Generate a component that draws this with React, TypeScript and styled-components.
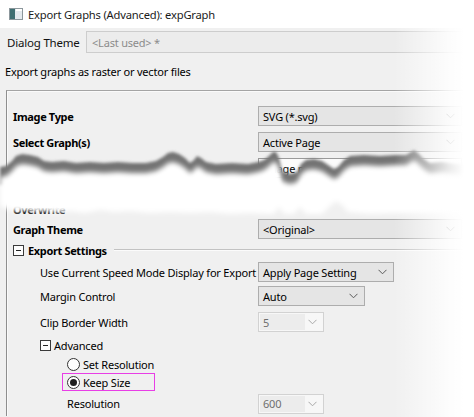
import React from "react";
import styled, { createGlobalStyle } from "styled-components";

const GlobalStyle = createGlobalStyle`
  html, body {
    margin: 0;
    padding: 0;
    background: #ffffff;
  }
  body {
    font-family: "Noto Sans", "Open Sans", "Liberation Sans", sans-serif;
    font-size: 11px;
    letter-spacing: -0.2px;
    color: #000;
  }
`;

const Window = styled.div`
  position: relative;
  width: 474px;
  height: 417px;
  overflow: hidden;
  background: #f0f0f0;
`;

const TitleBar = styled.div`
  height: 28px;
  background: #ffffff;
  display: flex;
  align-items: center;
  padding-left: 9px;
  gap: 5px;
  font-size: 11.2px;
  color: #1b1b1b;
`;

const ThemeRow = styled.div`
  display: flex;
  align-items: center;
  height: 28px;
  padding: 0 0 0 7px;
`;

const ThemeLabel = styled.span`
  width: 79px;
  font-size: 11.5px;
  color: #111;
`;

const ThemeInput = styled.div`
  flex: 1;
  height: 20px;
  display: flex;
  align-items: center;
  padding-left: 5px;
  background: #ececec;
  border: 1px solid #cdcdcd;
  border-right: none;
  color: #8b8b8b;
`;

const Description = styled.div`
  height: 30px;
  padding-bottom: 4px;
  display: flex;
  align-items: center;
  padding-left: 5px;
`;

const Panel = styled.div`
  margin-left: 6px;
  border-left: 1px solid #8e8e8e;
  border-top: 1px solid #a4a4a4;
  box-shadow: inset 1px 1px 0 #fafafa;
  padding-top: 12px;
`;

const Row = styled.div<{ $h: number }>`
  display: grid;
  grid-template-columns: 251px 1fr;
  align-items: center;
  height: ${(p) => p.$h}px;
`;

const Label = styled.div<{ $indent: number; $bold?: boolean }>`
  padding-left: ${(p) => p.$indent}px;
  font-weight: ${(p) => (p.$bold ? 700 : 400)};
  letter-spacing: ${(p) => (p.$bold ? "-0.35px" : "-0.2px")};
  white-space: nowrap;
`;

const Combo = styled.div<{ $w?: number; $disabled?: boolean }>`
  box-sizing: border-box;
  width: ${(p) => (p.$w ? `${p.$w}px` : "204px")};
  height: 20px;
  display: flex;
  align-items: center;
  justify-content: space-between;
  padding: 0 6px 0 4px;
  background: ${(p) => (p.$disabled ? "#f7f7f7" : "#e5e5e5")};
  border: 1px solid ${(p) => (p.$disabled ? "#d2d2d2" : "#adadad")};
  color: ${(p) => (p.$disabled ? "#6f6f6f" : "#000")};
`;

const ComboText = styled.span<{ $disabled?: boolean }>`
  display: flex;
  align-items: center;
  height: 16px;
  width: ${(p) => (p.$disabled ? "42px" : "auto")};
  margin-left: ${(p) => (p.$disabled ? "-3px" : "0")};
  padding-left: ${(p) => (p.$disabled ? "3px" : "0")};
  background: ${(p) => (p.$disabled ? "#ececec" : "transparent")};
`;

const EditBox = styled.div`
  box-sizing: border-box;
  width: 204px;
  height: 20px;
  display: flex;
  align-items: center;
  padding-left: 4px;
  background: #fbfbfb;
  border: 1px solid #9a9a9a;
`;

const GroupHeader = styled.div`
  display: flex;
  align-items: center;
  gap: 4px;
  padding-left: 6px;
  height: 22px;
  font-weight: 700;
  letter-spacing: -0.35px;
`;

const GroupLine = styled.div`
  flex: 1;
  height: 1px;
  margin-left: 3px;
  margin-top: -2px;
  background: #c2c2c2;
  box-shadow: 0 1px 0 #fbfbfb;
`;

const ToggleBox = styled.span`
  box-sizing: border-box;
  position: relative;
  width: 11px;
  height: 11px;
  border: 1px solid #3a3a3a;
  background: #fdfdfd;
  flex: none;
  &::after {
    content: "";
    position: absolute;
    left: 2px;
    right: 2px;
    top: 4px;
    height: 1px;
    background: #222;
  }
`;

const SubHeader = styled.div`
  display: flex;
  align-items: center;
  gap: 3px;
  padding-left: 33px;
  height: 20px;
`;

const RadioRow = styled.div<{ $h: number }>`
  display: flex;
  align-items: center;
  height: ${(p) => p.$h}px;
  padding-left: 55px;
`;

const RadioLabel = styled.label<{ $highlight?: boolean }>`
  box-sizing: border-box;
  display: flex;
  align-items: center;
  gap: 3px;
  height: 18px;
  padding-left: 4px;
  width: ${(p) => (p.$highlight ? "93px" : "auto")};
  border: 1.5px solid ${(p) => (p.$highlight ? "#e83ee6" : "transparent")};
`;

const RadioCircle = styled.span<{ $checked?: boolean }>`
  box-sizing: border-box;
  position: relative;
  width: 13px;
  height: 13px;
  border-radius: 50%;
  border: 1px solid #333;
  background: #fff;
  flex: none;
  &::after {
    content: "";
    display: ${(p) => (p.$checked ? "block" : "none")};
    position: absolute;
    left: 2px;
    top: 2px;
    width: 7px;
    height: 7px;
    border-radius: 50%;
    background: #1f1f1f;
  }
`;

const TearGap = styled.div`
  height: 18px;
`;

const Tear = styled.svg`
  position: absolute;
  left: 0;
  top: 140px;
`;

const Fade = styled.div`
  position: absolute;
  top: 0;
  right: 0;
  bottom: 0;
  width: 80px;
  pointer-events: none;
  background: linear-gradient(
    to right,
    rgba(255, 255, 255, 0) 0px,
    rgba(255, 255, 255, 0.85) 55px,
    #ffffff 70px
  );
`;

function Chevron({ disabled }: { disabled?: boolean }) {
  return (
    <svg width="9" height="6" viewBox="0 0 9 6">
      <polyline
        points="0.5,0.8 4.5,4.8 8.5,0.8"
        fill="none"
        stroke={disabled ? "#a8a8a8" : "#5a5a5a"}
        strokeWidth="1"
      />
    </svg>
  );
}

function WindowIcon() {
  return (
    <svg width="14" height="12" viewBox="0 0 14 12">
      <rect x="0.5" y="0.5" width="13" height="11" fill="#e4eaee" stroke="#8c979c" />
      <rect x="1" y="1" width="5" height="10" fill="#3f6f72" />
      <rect x="7" y="1" width="6" height="2" fill="#ffffff" />
    </svg>
  );
}

// torn paper edge of the upper piece (absolute y)
const upperEdge: [number, number][] = [
  [0, 167], [6, 166], [12, 161], [16, 156], [22, 154], [30, 155], [38, 157],
  [44, 161], [52, 162], [64, 161], [76, 163], [90, 162], [104, 163], [118, 162],
  [132, 163], [146, 163], [156, 161], [163, 157], [168, 153], [173, 152],
  [179, 154], [185, 158], [190, 163], [194, 160], [197, 156], [201, 158],
  [206, 162], [216, 164], [232, 163], [248, 164], [258, 162], [264, 160],
  [269, 156], [273, 152], [276, 152], [279, 158], [282, 171], [290, 174],
  [297, 172], [301, 164], [306, 160], [314, 159], [322, 161], [328, 165],
  [334, 169], [338, 167], [344, 160], [350, 156], [364, 155], [380, 156],
  [396, 155], [406, 155], [411, 152], [414, 150], [418, 153], [424, 159],
  [430, 163], [442, 162], [456, 164], [474, 165],
];

// torn edge of the lower piece
const lowerEdge: [number, number][] = [
  [0, 206], [10, 210], [18, 212], [26, 210], [34, 212], [44, 211], [56, 213],
  [70, 211], [85, 213], [100, 210], [115, 212], [130, 211], [150, 213],
  [170, 212], [190, 213], [210, 212], [230, 214], [250, 213], [266, 214],
  [274, 214], [279, 207], [284, 214], [294, 214], [300, 207], [306, 214],
  [322, 214], [330, 206], [336, 201], [342, 205], [348, 212], [370, 214],
  [400, 213], [474, 213],
];

const OFF = 140;
const pts = (list: [number, number][], dy = 0) =>
  list.map(([x, y]) => `${x},${y - OFF + dy}`).join(" ");

function TornEdge() {
  const shadow = pts(upperEdge) + " " + pts([...upperEdge].reverse(), 18);
  const paper = pts(upperEdge, 10) + " " + pts([...lowerEdge].reverse());
  return (
    <Tear width="474" height="90" viewBox="0 0 474 90">
      <defs>
        <filter id="soft" x="-5%" y="-40%" width="110%" height="180%">
          <feGaussianBlur stdDeviation="1.4" />
        </filter>
        <filter id="softer" x="-5%" y="-40%" width="110%" height="180%">
          <feGaussianBlur stdDeviation="2.4" />
        </filter>
      </defs>
      <polygon points={shadow} fill="#737373" filter="url(#soft)" />
      <polygon points={paper} fill="#ffffff" filter="url(#softer)" />
    </Tear>
  );
}

export default function App() {
  return (
    <>
      <GlobalStyle />
      <Window>
        <TitleBar>
          <WindowIcon />
          <span>Export Graphs (Advanced): expGraph</span>
        </TitleBar>
        <ThemeRow>
          <ThemeLabel>Dialog Theme</ThemeLabel>
          <ThemeInput>&lt;Last used&gt; *</ThemeInput>
        </ThemeRow>
        <Description>Export graphs as raster or vector files</Description>
        <Panel>
          <Row $h={26}>
            <Label $indent={6} $bold>Image Type</Label>
            <Combo>
              <span>SVG (*.svg)</span>
              <Chevron />
            </Combo>
          </Row>
          <Row $h={26}>
            <Label $indent={6} $bold>Select Graph(s)</Label>
            <Combo>
              <span>Active Page</span>
              <Chevron />
            </Combo>
          </Row>
          <Row $h={26}>
            <Label $indent={6} $bold />
            <EditBox>Image name</EditBox>
          </Row>
          <TearGap />
          <Row $h={20}>
            <Label $indent={6} $bold>Overwrite</Label>
            <span />
          </Row>
          <Row $h={20}>
            <Label $indent={6} $bold>Graph Theme</Label>
            <Combo>
              <span>&lt;Original&gt;</span>
              <Chevron />
            </Combo>
          </Row>
          <GroupHeader>
            <ToggleBox />
            <span>Export Settings</span>
            <GroupLine />
          </GroupHeader>
          <Row $h={22}>
            <Label $indent={33}>Use Current Speed Mode Display for Export</Label>
            <Combo $w={136}>
              <span>Apply Page Setting</span>
              <Chevron />
            </Combo>
          </Row>
          <Row $h={26}>
            <Label $indent={33}>Margin Control</Label>
            <Combo $w={107}>
              <span>Auto</span>
              <Chevron />
            </Combo>
          </Row>
          <Row $h={26}>
            <Label $indent={33}>Clip Border Width</Label>
            <Combo $w={66} $disabled>
              <ComboText $disabled>5</ComboText>
              <Chevron disabled />
            </Combo>
          </Row>
          <SubHeader>
            <ToggleBox />
            <span>Advanced</span>
          </SubHeader>
          <RadioRow $h={18}>
            <RadioLabel>
              <RadioCircle />
              <span>Set Resolution</span>
            </RadioLabel>
          </RadioRow>
          <RadioRow $h={18}>
            <RadioLabel $highlight>
              <RadioCircle $checked />
              <span>Keep Size</span>
            </RadioLabel>
          </RadioRow>
          <Row $h={25}>
            <Label $indent={60}>Resolution</Label>
            <Combo $w={66} $disabled>
              <ComboText $disabled>600</ComboText>
              <Chevron disabled />
            </Combo>
          </Row>
        </Panel>
        <TornEdge />
        <Fade />
      </Window>
    </>
  );
}
